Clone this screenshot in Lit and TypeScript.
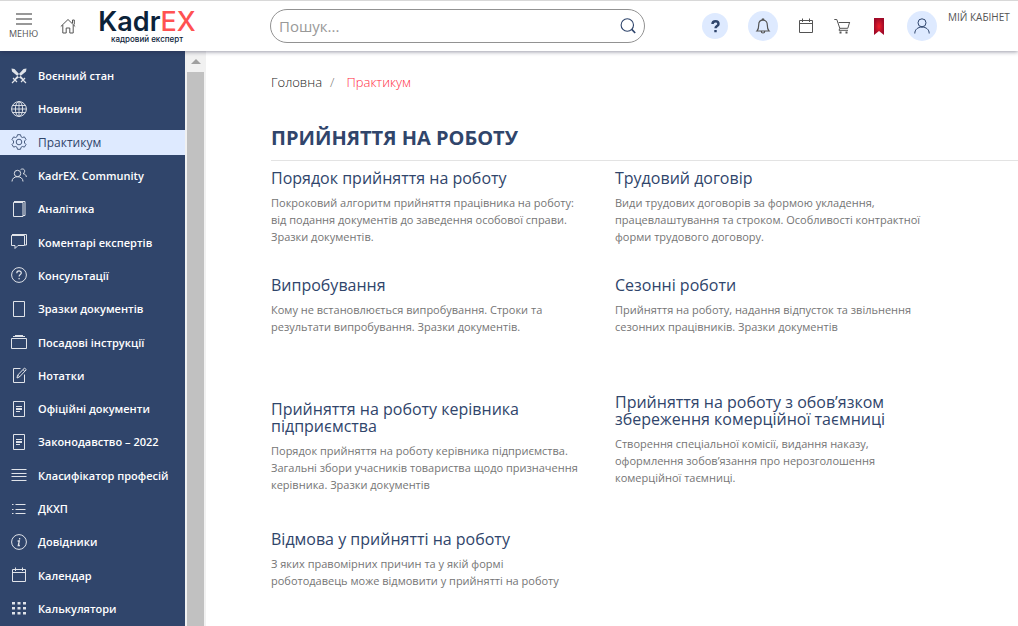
import { LitElement, html, css, svg } from "lit";
import { customElement, property, state } from "lit/decorators.js";
import { classMap } from "lit/directives/class-map.js";

const icons: Record<string, unknown> = {
  swords: svg`<path d="M.5.5l3 .5 10 11-1 1L1 3.500zM15.500.5l-3 .5-10 11 1 1L15 3.500z" fill="currentColor" stroke="none"/><path d="M2 10l4 4M4 12l-3 3M14 10l-4 4M12 12l3 3" stroke-width="1.200"/>`,
  globe: svg`<circle cx="8" cy="8" r="7.400"/><ellipse cx="8" cy="8" rx="3.600" ry="7.400"/><path d="M8 .6v14.800M1.600 4.500h12.800M1.600 11.500h12.800M.6 8h14.800" stroke-width=".9"/>`,
  gear: svg`<circle cx="8" cy="8" r="2.800"/><path d="M6.500.7h3l.5 2 1.400.8 2-.6 1.600 2.600-1.500 1.500v2l1.500 1.500-1.600 2.600-2-.6-1.400.8-.5 2h-3l-.5-2-1.400-.8-2 .6L1 10.500 2.500 9V7L1 5.500l1.600-2.600 2 .6L6 2.700z" stroke-linejoin="round"/>`,
  people: svg`<circle cx="6.500" cy="6.500" r="3.200"/><path d="M1 14.500c0-3 2.500-4.800 5.500-4.800s5.500 1.800 5.500 4.800M9.500 2.800c1-1.300 4.200-1.200 4.200 1.400 0 1.200-.8 2-1.700 2.400 2 .4 3.200 1.500 3.400 3.400"/>`,
  pages: svg`<path d="M2.500 1.500h9.500v14H2.500zM3 .5h11v14h-2"/>`,
  comment: svg`<path d="M.5 1.500h13v10H7l-3 3v-3H.5zM1 .5h14.500v10.500H14"/>`,
  question: svg`<circle cx="8" cy="8" r="7.400"/><path d="M5.800 6.200c0-3 4.500-2.900 4.500-.2 0 1.600-2.200 1.600-2.200 3.600M8.100 11v1.300" stroke-width="1.200"/>`,
  page: svg`<path d="M2.500.5h11v15h-11z"/>`,
  stack: svg`<path d="M.5 4.500h15v10H.5zM2 2.500h12M4 1.500h8"/>`,
  note: svg`<path d="M9.500 1.500h-7v14h11v-8M6 11l.6-2.800L13.500 1l1.800 1.700-6.800 7.200zM12 2.600l1.800 1.700M7 8.200l1.700 1.700"/>`,
  doc: svg`<path d="M2.500.5h11v15h-11zM5 5.500h6M5 7.500h6M5 8.500h6M5 10.500h4"/>`,
  lines: svg`<path d="M.5 2.500h15M.5 6.500h15M.5 9.500h15M.5 13.500h15"/>`,
  list: svg`<path d="M1 3.500h1.500M4.500 3.500h10M1 8.500h1.500M4.500 8.500h10M1 12.500h1.500M4.500 12.500h10"/>`,
  info: svg`<circle cx="8" cy="8" r="7.400"/><path d="M6.600 7h1.700l-1 4.500h1.600M8.600 4v1.400" stroke-width="1.300"/>`,
  calendar: svg`<path d="M1.500 2.500h13v12h-13zM1.500 5.500h13M4.500.5v3.500M11.500.5v3.500"/>`,
  grid: svg`<path d="M1 1h3v2.500H1zM6.500 1h3v2.500h-3zM12 1h3v2.500h-3zM1 6h3v2.500H1zM6.500 6h3v2.500h-3zM12 6h3v2.500h-3zM1 11h3v2.500H1zM6.500 11h3v2.500h-3zM12 11h3v2.500h-3z" fill="currentColor" stroke="none"/>`,
  home: svg`<path d="M.8 8.500L8 1.500l7.200 7M2.800 7v8h3.400V10h3.600v5h3.400V7M12.500 5V2h1.800v4.500"/>`,
  menu: svg`<path d="M0 2h16M0 7h16M0 12h16" stroke-width="1.600"/>`,
  search: svg`<circle cx="7.300" cy="7" r="6.200" stroke-width="1.100"/><path d="M11.800 11.400l3.400 3.600" stroke-width="1.600"/>`,
  help: svg`<path d="M4.300 5c0-4.600 7.400-4.400 7.400-.2 0 2.700-3.700 2.600-3.700 5.400M8 12.200v3" stroke-width="3"/>`,
  bell: svg`<path d="M2 13c1.500-1.500 1.700-3 1.700-6C3.700 4.500 5 2.200 8 2.200S12.300 4.500 12.300 7c0 3 .2 4.500 1.700 6zM6.200 13.200c.2 2.400 3.400 2.400 3.600 0M7 2c0-1.600 2-1.600 2 0" stroke-width="1.200"/>`,
  cart: svg`<path d="M.3 1.500h2.500l3 8.800h8L15.700 4M4.700 4.500h11M5.800 10.300l-.8 2h9"/><path d="M5.500 13.500h2V15.500h-2zM11.500 13.500h2V15.500h-2z" fill="currentColor" stroke="none"/>`,
  user: svg`<circle cx="8" cy="4.800" r="4"/><path d="M.8 15.500c0-4 3-6.400 7.200-6.400s7.200 2.400 7.200 6.400"/>`,
};

@customElement("kx-icon")
class KxIcon extends LitElement {
  static styles = css`
    :host { display: block; width: 16px; height: 16px; flex: none; }
    .icon { display: block; width: 100%; height: 100%; fill: none; stroke: currentColor; overflow: visible; }
  `;
  @property() name = "";
  render() {
    return html`<svg class="icon" viewBox="0 0 16 16" aria-hidden="true">${icons[this.name]}</svg>`;
  }
}

const sections: [string, string][] = [
  ["swords", "Воєнний стан"],
  ["globe", "Новини"],
  ["gear", "Практикум"],
  ["people", "KadrEX. Community"],
  ["pages", "Аналітика"],
  ["comment", "Коментарі експертів"],
  ["question", "Консультації"],
  ["page", "Зразки документів"],
  ["stack", "Посадові інструкції"],
  ["note", "Нотатки"],
  ["doc", "Офіційні документи"],
  ["doc", "Законодавство – 2022"],
  ["lines", "Класифікатор професій"],
  ["list", "ДКХП"],
  ["info", "Довідники"],
  ["calendar", "Календар"],
  ["grid", "Калькулятори"],
];

interface Topic { title: string; text: string; }

const columns: Topic[][] = [
  [
    { title: "Порядок прийняття на роботу", text: "Покроковий алгоритм прийняття працівника на роботу:\nвід подання документів до заведення особової справи.\nЗразки документів." },
    { title: "Випробування", text: "Кому не встановлюється випробування. Строки та\nрезультати випробування. Зразки документів." },
    { title: "Прийняття на роботу керівника\nпідприємства", text: "Порядок прийняття на роботу керівника підприємства.\nЗагальні збори учасників товариства щодо призначення\nкерівника. Зразки документів" },
    { title: "Відмова у прийнятті на роботу", text: "З яких правомірних причин та у якій формі\nроботодавець може відмовити у прийнятті на роботу" },
  ],
  [
    { title: "Трудовий договір", text: "Види трудових договорів за формою укладення,\nпрацевлаштування та строком. Особливості контрактної\nформи трудового договору." },
    { title: "Сезонні роботи", text: "Прийняття на роботу, надання відпусток та звільнення\nсезонних працівників. Зразки документів" },
    { title: "Прийняття на роботу з обов’язком\nзбереження комерційної таємниці", text: "Створення спеціальної комісії, видання наказу,\nоформлення зобов’язання про нерозголошення\nкомерційної таємниці." },
  ],
];

@customElement("app-root")
class AppRoot extends LitElement {
  static styles = css`
    :host {
      display: flex; flex-direction: column; height: 100vh; overflow: hidden;
      background: #fff; color: #545454; font-family: "Open Sans", "Noto Sans", sans-serif;
    }
    * { box-sizing: border-box; }
    a { color: inherit; text-decoration: none; }
    button { border: 0; padding: 0; background: none; color: inherit; font: inherit; cursor: pointer; }
    .header {
      display: flex; align-items: center; flex: none; height: 51px; padding: 0 10px; z-index: 1;
      border-top: 1px solid #d8d8d8; background: #fff; box-shadow: 0 1px 4px rgba(30, 30, 60, 0.45);
    }
    .menu { display: flex; flex-direction: column; align-items: center; width: 27px; padding-bottom: 1px; font-size: 9px; line-height: 12px; }
    .menu kx-icon { color: #777; }
    .home { margin-left: 23px; }
    .logo { display: flex; flex-direction: column; align-items: center; width: 100px; margin-left: 21px; color: #0b2239; font-family: Inter, sans-serif; }
    .brand { font-size: 27px; font-weight: 600; line-height: 26px; }
    .accent { color: #ff5252; font-weight: 500; }
    .tagline { font-size: 8px; font-weight: 500; line-height: 8px; }
    .search {
      display: flex; align-items: center; width: 375px; height: 34px; margin-left: 73px; padding: 0 8px;
      border: 1px solid #929292; border-radius: 17px; color: #2f456c;
    }
    .query { flex: 1; min-width: 0; border: 0; padding: 0; outline: 0; background: none; font: 400 15px/20px "Open Sans", sans-serif; color: #444; }
    .query::placeholder { color: #999; opacity: 1; }
    .tools { display: flex; align-items: center; align-self: stretch; margin-left: auto; }
    .round { display: grid; place-items: center; width: 30px; height: 30px; border-radius: 50%; background: #deeaff; }
    .help { width: 26px; height: 26px; margin-right: 20px; color: #2f456c; }
    .help kx-icon { width: 13px; height: 13px; }
    .tool { margin-left: 20px; }
    .bookmark { display: block; width: 10px; height: 17px; }
    .flag { margin: 0 23px 0 24px; }
    .account { align-self: flex-start; width: 60px; margin: 9px 0 0 11px; font-size: 10px; line-height: 14px; white-space: nowrap; }
    .user { color: #2f456c; }
    .body { display: flex; flex: 1; min-height: 0; }
    .sidebar { flex: none; width: 185px; background: #30456b; color: #fff; overflow: hidden; }
    .nav { display: flex; flex-direction: column; justify-content: space-between; min-height: 100%; margin: 0; padding: 12px 0 5px; list-style: none; }
    .link { display: flex; align-items: center; gap: 11px; height: 25px; padding-left: 11px; font-size: 11px; font-weight: 600; white-space: nowrap; }
    .link kx-icon { opacity: 0.85; }
    .active { background: #deeaff; color: #30456b; font-size: 12px; font-weight: 400; }
    .scroll { display: flex; flex-direction: column; flex: none; width: 21px; padding: 0 2px; background: #f1f1f1; }
    .up { display: grid; place-items: center; height: 21px; }
    .arrow { border: 5px solid transparent; border-top: 0; border-bottom-color: #a0a0a0; }
    .thumb { flex: 1; background: #c1c1c1; }
    .content { flex: 1; min-width: 0; padding: 21px 0 0 65px; overflow: hidden; }
    .crumbs { display: flex; gap: 8px; font-size: 13px; font-weight: 300; line-height: 20px; color: #222; }
    .current { margin-left: 4px; color: #ff2a40; }
    .slash { color: #777; }
    .title { margin: 33px 0 0; padding-bottom: 9px; border-bottom: 1px solid #e3e3e3; color: #30456b; font-size: 20px; font-weight: 700; line-height: 26px; }
    .columns { display: flex; gap: 40px; padding-top: 9px; }
    .column { flex: 0 1 304px; min-width: 0; }
    .topic { margin-bottom: 32px; white-space: pre; }
    .heading { margin: 0; color: #30456b; font-size: 16px; font-weight: 400; line-height: 17px; }
    .text { margin: 7px 0 0; color: #757575; font-size: 11px; line-height: 17px; }
    .topic:nth-child(2) { margin-bottom: 66px; }
    .column:last-child .topic:nth-child(2) { margin-bottom: 59px; }
    .topic:nth-child(3) { margin-bottom: 38px; }
  `;

  @state() private current = "Практикум";

  render() {
    return html`
      <header class="header">
        <button class="menu"><kx-icon name="menu"></kx-icon>МЕНЮ</button>
        <a class="home" href="#" aria-label="Головна"><kx-icon name="home"></kx-icon></a>
        <a class="logo" href="#">
          <span class="brand">Kadr<span class="accent">EX</span></span>
          <span class="tagline">кадровий експерт</span>
        </a>
        <form class="search" role="search">
          <input class="query" type="text" aria-label="Пошук" placeholder="Пошук..." />
          <button type="button" aria-label="Знайти"><kx-icon name="search"></kx-icon></button>
        </form>
        <div class="tools">
          <button class="round help" aria-label="Допомога"><kx-icon name="help"></kx-icon></button>
          <button class="round" aria-label="Сповіщення"><kx-icon name="bell"></kx-icon></button>
          <button class="tool" aria-label="Календар"><kx-icon name="calendar"></kx-icon></button>
          <button class="tool" aria-label="Кошик"><kx-icon name="cart"></kx-icon></button>
          <button class="flag" aria-label="Закладки">
            <svg class="bookmark" viewBox="0 0 10 17" aria-hidden="true">
              <defs><radialGradient id="red"><stop offset="0" stop-color="#f0202c" /><stop offset="1" stop-color="#a00a28" /></radialGradient></defs>
              <path d="M0 0h10v17l-5-4-5 4z" fill="url(#red)" />
            </svg>
          </button>
          <button class="round user" aria-label="Профіль"><kx-icon name="user"></kx-icon></button>
          <a class="account" href="#">МІЙ КАБІНЕТ</a>
        </div>
      </header>
      <div class="body">
        <nav class="sidebar">
          <ul class="nav">
            ${sections.map(([icon, label]) => html`<li>
              <a href="#" class=${classMap({ link: true, active: label === this.current })} @click=${() => (this.current = label)}>
                <kx-icon name=${icon}></kx-icon>${label}
              </a>
            </li>`)}
          </ul>
        </nav>
        <div class="scroll" aria-hidden="true"><div class="up"><span class="arrow"></span></div><div class="thumb"></div></div>
        <main class="content">
          <nav class="crumbs"><a href="#">Головна</a><span class="slash">/</span><a class="current" href="#">Практикум</a></nav>
          <h1 class="title">ПРИЙНЯТТЯ НА РОБОТУ</h1>
          <div class="columns">
            ${columns.map((topics) => html`<div class="column">
              ${topics.map((t) => html`<article class="topic"><h2 class="heading"><a href="#">${t.title}</a></h2><p class="text">${t.text}</p></article>`)}
            </div>`)}
          </div>
        </main>
      </div>
    `;
  }
}
